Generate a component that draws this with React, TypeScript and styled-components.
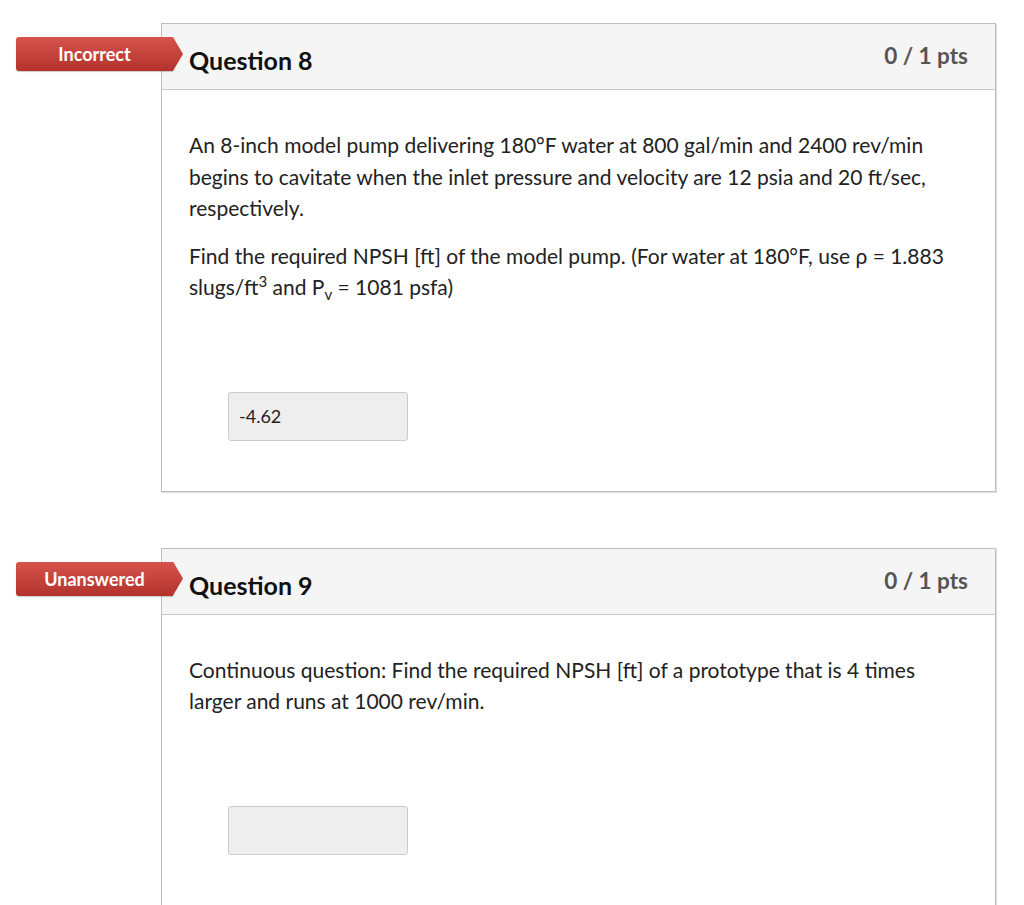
import React from "react";
import styled, { createGlobalStyle } from "styled-components";

const Global = createGlobalStyle`
  html, body { margin: 0; padding: 0; background: #fff; }
  body { font-family: Lato, "Open Sans", sans-serif; color: #222; }
`;

const Page = styled.div`
  display: flex;
  flex-direction: column;
  gap: 56px;
  padding: 23px 0 0 161px;
  width: 835px;
`;

const Card = styled.section`
  position: relative;
  border: 1px solid #bdbdbd;
  box-shadow: 1px 1px 1px rgba(0, 0, 0, 0.12);
  background: #fff;
`;

const Header = styled.header`
  display: flex;
  justify-content: space-between;
  align-items: center;
  height: 66px;
  box-sizing: border-box;
  padding: 0 27px 0 27px;
  background: #f5f5f5;
  border-bottom: 1px solid #c7c7c7;
`;

const Title = styled.h2`
  margin: 7px 0 0 0;
  font-size: 25px;
  font-weight: 700;
  color: #111;
`;

const Points = styled.div`
  font-size: 22.5px;
  font-weight: 700;
  color: #555;
  margin-top: -2px;
`;

const Badge = styled.div`
  position: absolute;
  left: -146px;
  top: 13px;
  width: 157px;
  height: 34px;
  display: flex;
  align-items: center;
  justify-content: center;
  color: #fff;
  font-size: 18px;
  font-weight: 700;
  background: linear-gradient(#d6544c, #b3322c);
  border-radius: 3px 0 0 3px;
  box-shadow: 0 1px 1px rgba(0, 0, 0, 0.2);
  &::after {
    content: "";
    position: absolute;
    right: -10px;
    top: 0;
    width: 10px;
    height: 34px;
    background: linear-gradient(#d6544c, #b3322c);
    clip-path: polygon(0 0, 100% 50%, 0 100%);
  }
`;

const Body = styled.div`
  padding: 39px 27px 50px 27px;
`;

const Para = styled.p`
  margin: 0 0 16px 0;
  font-size: 21px;
  line-height: 31.5px;
  color: #222;
  &:last-of-type { margin-bottom: 0; }
  sup, sub { font-size: 15px; line-height: 1; }
`;

const Answer = styled.div`
  margin: 89px 0 0 39px;
  width: 180px;
  height: 49px;
  box-sizing: border-box;
  padding: 0 10px;
  display: flex;
  align-items: center;
  background: #eeeeee;
  border: 1px solid #cccccc;
  border-radius: 3px;
  font-size: 18px;
  color: #222;
`;

type Q = {
  status: string;
  title: string;
  paras: React.ReactNode[];
  answer: string;
};

const questions: Q[] = [
  {
    status: "Incorrect",
    title: "Question 8",
    paras: [
      "An 8-inch model pump delivering 180°F water at 800 gal/min and 2400 rev/min begins to cavitate when the inlet pressure and velocity are 12 psia and 20 ft/sec, respectively.",
      <>
        Find the required NPSH [ft] of the model pump. (For water at 180°F, use ρ = 1.883 slugs/ft<sup>3</sup> and P<sub>v</sub> = 1081 psfa)
      </>,
    ],
    answer: "-4.62",
  },
  {
    status: "Unanswered",
    title: "Question 9",
    paras: [
      "Continuous question: Find the required NPSH [ft] of a prototype that is 4 times larger and runs at 1000 rev/min.",
    ],
    answer: "",
  },
];

export default function App() {
  return (
    <>
      <Global />
      <Page>
        {questions.map((q) => (
          <Card key={q.title}>
            <Badge>{q.status}</Badge>
            <Header>
              <Title>{q.title}</Title>
              <Points>0 / 1 pts</Points>
            </Header>
            <Body>
              {q.paras.map((p, i) => (
                <Para key={i}>{p}</Para>
              ))}
              <Answer>{q.answer}</Answer>
            </Body>
          </Card>
        ))}
      </Page>
    </>
  );
}
